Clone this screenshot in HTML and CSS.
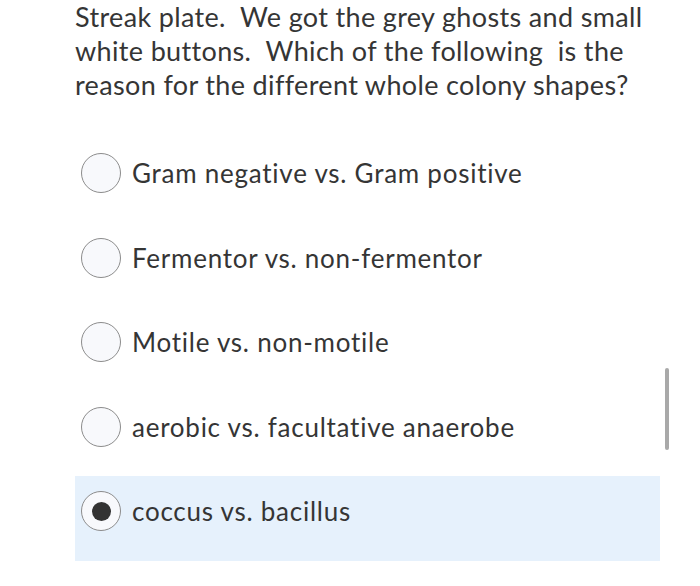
FILE: index.html
```html
<!DOCTYPE html>
<html>
<head>
<meta charset="utf-8">
<link rel="stylesheet" href="styles.css">
</head>
<body>
<div class="quiz">
  <p class="question">Streak plate.&nbsp; We got the grey ghosts and small white buttons.&nbsp; Which of the following&nbsp; is the reason for the different whole colony shapes?</p>
  <ul class="answers">
    <li class="answer"><span class="radio"></span><span class="label">Gram negative vs. Gram positive</span></li>
    <li class="answer"><span class="radio"></span><span class="label">Fermentor vs. non-fermentor</span></li>
    <li class="answer"><span class="radio"></span><span class="label">Motile vs. non-motile</span></li>
    <li class="answer"><span class="radio"></span><span class="label">aerobic vs. facultative anaerobe</span></li>
    <li class="answer selected"><span class="radio"></span><span class="label">coccus vs. bacillus</span></li>
  </ul>
  <div class="scrollbar"></div>
</div>
</body>
</html>
```
FILE: styles.css
```css
html, body {
  margin: 0;
  padding: 0;
  background: #ffffff;
}
body {
  font-family: Lato, "Open Sans", sans-serif;
  color: #353535;
}
.quiz {
  position: relative;
  width: 700px;
  height: 586px;
  padding: 0 0 0 75px;
  box-sizing: border-box;
}
.question {
  margin: 0;
  padding-top: 0;
  width: 585px;
  font-size: 27px;
  letter-spacing: 0.35px;
  line-height: 34px;
}
.answers {
  list-style: none;
  margin: 0;
  padding: 0;
  margin-top: 36px;
  width: 585px;
}
.answer {
  display: flex;
  align-items: flex-start;
  height: 84.5px;
  box-sizing: border-box;
  padding: 15px 0 0 6px;
}
.answer.selected {
  background: #e6f1fc;
}
.radio {
  width: 40px;
  height: 40px;
  box-sizing: border-box;
  border: 1.5px solid #8c8c8c;
  border-radius: 50%;
  background: #f8f9fc;
  display: flex;
  align-items: center;
  justify-content: center;
  flex: none;
}
.selected .radio::after {
  content: "";
  width: 19px;
  height: 19px;
  border-radius: 50%;
  background: #333333;
}
.label {
  margin-left: 11px;
  font-size: 26px;
  letter-spacing: 0.75px;
  line-height: 40px;
}
.scrollbar {
  position: absolute;
  left: 665px;
  top: 368px;
  width: 4px;
  height: 82px;
  border-radius: 2px;
  background: #a9a9a9;
}
```
